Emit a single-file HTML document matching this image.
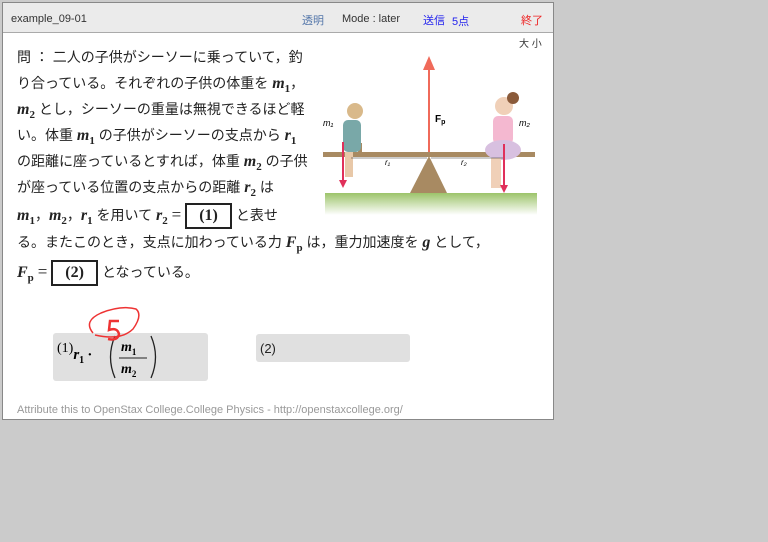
<!DOCTYPE html>
<html><head><meta charset="utf-8"><style>
body{margin:0;width:768px;height:542px;background:#cbcbcb;font-family:"Liberation Sans","Noto Sans CJK JP",sans-serif;position:relative;overflow:hidden}
#box{position:absolute;left:2px;top:2px;width:552px;height:418px;background:#fff;border:1px solid #888;box-sizing:border-box}
#hd{position:absolute;left:0;top:0;width:100%;height:29px;background:#ebebeb;border-bottom:1px solid #aaa;font-size:11px;color:#333}
.a{position:absolute;white-space:nowrap}
.t{position:absolute;left:14px;font-size:14px;color:#222;white-space:nowrap;line-height:20px}
.m{font-family:"Liberation Serif",serif;font-style:italic;font-weight:bold;font-size:16px}
.m sub{font-style:normal;font-size:11px}
.bx{display:inline-block;border:2px solid #222;padding:0 12px;font-family:"Liberation Serif",serif;font-weight:bold;font-size:16px;line-height:22px;margin:0 4px}
.ans{position:absolute;background:#e0e0e0;border-radius:3px}
</style></head><body>
<div id="box">
<div id="hd">
<span class="a" style="left:8px;top:10px">example_09-01</span>
<span class="a" style="left:299px;top:9px;color:#5577aa">透明</span>
<span class="a" style="left:339px;top:10px">Mode : later</span>
<span class="a" style="left:420px;top:9px;color:#2222ee">送信</span>
<span class="a" style="left:449px;top:10px;color:#2222ee">5点</span>
<span class="a" style="left:518px;top:9px;color:#ee2222">終了</span>
</div>
<span class="a" style="left:516px;top:32px;font-size:10px;color:#333">大 小</span>
<div class="t" style="top:44px">問 ： 二人の子供がシーソーに乗っていて，釣</div>
<div class="t" style="top:70px">り合っている。それぞれの子供の体重を <span class="m">m<sub>1</sub></span>，</div>
<div class="t" style="top:96px"><span class="m">m<sub>2</sub></span> とし，シーソーの重量は無視できるほど軽</div>
<div class="t" style="top:122px">い。体重 <span class="m">m<sub>1</sub></span> の子供がシーソーの支点から <span class="m">r<sub>1</sub></span></div>
<div class="t" style="top:148px">の距離に座っているとすれば，体重 <span class="m">m<sub>2</sub></span> の子供</div>
<div class="t" style="top:174px">が座っている位置の支点からの距離 <span class="m">r<sub>2</sub></span> は</div>
<div class="t" style="top:200px"><span class="m">m<sub>1</sub></span>，<span class="m">m<sub>2</sub></span>，<span class="m">r<sub>1</sub></span> を用いて <span class="m">r<sub>2</sub></span> <span style="font-family:'Liberation Serif';font-size:17px">=</span><span class="bx">(1)</span>と表せ</div>
<div class="t" style="top:229px">る。またこのとき，支点に加わっている力 <span class="m">F<sub>p</sub></span> は，重力加速度を <span class="m">g</span> として，</div>
<div class="t" style="top:257px"><span class="m">F<sub>p</sub></span> <span style="font-family:'Liberation Serif';font-size:17px">=</span><span class="bx">(2)</span>となっている。</div>
<svg class="a" style="left:320px;top:45px" width="216" height="170">
<defs><linearGradient id="g" x1="0" y1="0" x2="0" y2="1"><stop offset="0" stop-color="#9cc46a"/><stop offset="1" stop-color="#fff"/></linearGradient></defs>
<rect x="2" y="145" width="212" height="22" fill="url(#g)"/>
<polygon points="87,145 106,108 124,145" fill="#a88a62"/>
<rect x="0" y="104" width="212" height="5" fill="#a88a62"/>
<rect x="35" y="95" width="4" height="10" fill="#a88a62"/><rect x="175" y="95" width="4" height="10" fill="#a88a62"/>
<line x1="106" y1="104" x2="106" y2="20" stroke="#f06a5a" stroke-width="2"/>
<polygon points="100,22 106,8 112,22" fill="#f06a5a"/>
<text x="112" y="74" font-size="10" font-weight="bold" font-family="Liberation Sans">F<tspan font-size="7" dy="2">p</tspan></text>
<text x="0" y="78" font-size="9" font-style="italic" font-family="Liberation Sans">m₁</text>
<text x="196" y="78" font-size="9" font-style="italic" font-family="Liberation Sans">m₂</text>
<circle cx="32" cy="63" r="8" fill="#d9b98a"/>
<rect x="20" y="72" width="18" height="32" rx="5" fill="#79a8a8"/>
<rect x="22" y="104" width="8" height="25" fill="#e8c8a8"/>
<circle cx="181" cy="58" r="9" fill="#f0d0b8"/><circle cx="190" cy="50" r="6" fill="#8a5a3a"/>
<rect x="170" y="68" width="20" height="28" rx="5" fill="#f4b8d0"/>
<ellipse cx="180" cy="102" rx="18" ry="10" fill="#d8c0e0"/>
<rect x="168" y="110" width="10" height="30" fill="#f0d0b8"/>
<line x1="20" y1="94" x2="20" y2="135" stroke="#e0305a" stroke-width="2"/><polygon points="16,132 20,140 24,132" fill="#e0305a"/>
<line x1="181" y1="96" x2="181" y2="140" stroke="#e0305a" stroke-width="2"/><polygon points="177,137 181,145 185,137" fill="#e0305a"/>
<line x1="28" y1="110" x2="104" y2="110" stroke="#333" stroke-width="0.6"/><line x1="108" y1="110" x2="180" y2="110" stroke="#333" stroke-width="0.6"/>
<text x="62" y="117" font-size="8" font-style="italic">r₁</text><text x="138" y="117" font-size="8" font-style="italic">r₂</text>
</svg>
<div class="ans" style="left:50px;top:330px;width:155px;height:48px"></div>
<span class="a" style="left:54px;top:337px;font-family:'Liberation Serif',serif;font-size:14px">(1)<span style="font-style:italic;font-weight:bold;font-size:15px;position:relative;top:7px">r<sub style="font-style:normal;font-size:10px">1</sub> · </span></span>
<svg class="a" style="left:102px;top:330px" width="56" height="50"><path d="M10 3 Q1 24 10 45" fill="none" stroke="#222" stroke-width="1.3"/><path d="M46 3 Q55 24 46 45" fill="none" stroke="#222" stroke-width="1.3"/><line x1="14" y1="25" x2="42" y2="25" stroke="#222"/></svg>
<span class="a" style="left:118px;top:337px;font-family:'Liberation Serif',serif;font-style:italic;font-weight:bold;font-size:14px">m<sub style="font-style:normal;font-size:9px">1</sub></span>
<span class="a" style="left:118px;top:359px;font-family:'Liberation Serif',serif;font-style:italic;font-weight:bold;font-size:14px">m<sub style="font-style:normal;font-size:9px">2</sub></span>
<svg class="a" style="left:78px;top:300px" width="64" height="42"><path d="M12 30 Q2 18 20 10 Q40 2 55 6 Q62 12 52 26 Q40 38 14 32" fill="none" stroke="#ee3333" stroke-width="1.5"/><path d="M38 18 L29 18 L28 27 Q36 24 38 31 Q37 38 27 36" fill="none" stroke="#ee3333" stroke-width="2.5"/></svg>
<div class="ans" style="left:253px;top:331px;width:154px;height:28px"></div>
<span class="a" style="left:257px;top:338px;font-size:13px;color:#222">(2)</span>
<span class="a" style="left:14px;top:401px;font-size:11px;color:#999">Attribute this to OpenStax College.College Physics - http://openstaxcollege.org/</span>
</div>
</body></html>
